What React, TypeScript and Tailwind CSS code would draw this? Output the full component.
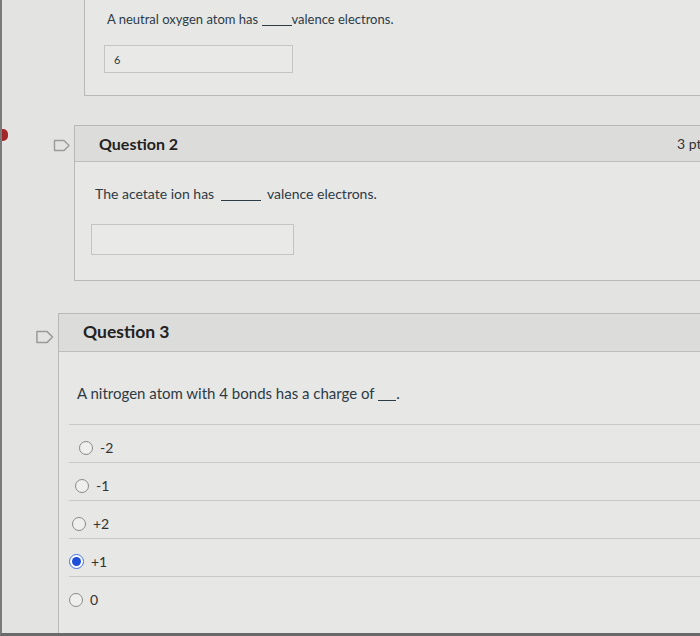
import React from "react";

function Flag({ w = 18, h = 13 }: { w?: number; h?: number }) {
  return (
    <svg width={w} height={h} viewBox="0 0 18 13" fill="none">
      <path d="M1.5 1.5 H11 L16 6.5 L11 11.5 H1.5 Z" stroke="#9a9a9a" strokeWidth="1.4" strokeLinejoin="round" />
    </svg>
  );
}

function Radio({ checked }: { checked?: boolean }) {
  if (checked) {
    return (
      <span className="w-[15px] h-[15px] rounded-full border-[1.5px] border-[#3b6fe0] bg-white flex items-center justify-center shrink-0">
        <span className="w-[9px] h-[9px] rounded-full bg-[#1f4fd8]" />
      </span>
    );
  }
  return <span className="w-[14px] h-[14px] rounded-full border-[1.5px] border-[#8a8a8a] bg-[#efefed] shrink-0" />;
}

function Blank({ w }: { w: string }) {
  return <span className={`inline-block h-[1px] bg-[#2d3b45] align-baseline translate-y-[2px] ${w}`} />;
}

export default function App() {
  const options = [
    { label: "-2", pl: "pl-[10px]" },
    { label: "-1", pl: "pl-[6px]" },
    { label: "+2", pl: "pl-[3px]" },
    { label: "+1", pl: "pl-[0px]", checked: true },
    { label: "0", pl: "pl-[0px]" },
  ];
  return (
    <div
      className="w-[700px] h-[636px] overflow-hidden bg-[#e3e3e1] relative border-l-2 border-l-[#7a7a7a] border-b-[3px] border-b-[#6a6a6a] text-[#2d3b45]"
      style={{ fontFamily: "Lato, 'Open Sans', sans-serif" }}
    >
      {/* Question 1 (tail) */}
      <div className="ml-[82px] h-[96px] border-l border-b border-[#b9b9b7] bg-[#e7e7e5] pl-[22px] pt-[10px]">
        <div className="text-[13px] leading-[18px]">
          A neutral oxygen atom has <Blank w="w-[30px]" />valence electrons.
        </div>
        <div className="mt-[17px] ml-[-3px] w-[189px] h-[28px] border border-[#c4c4c2] bg-[#e9e9e7] text-[11px] pl-[9px] pt-[6px]">6</div>
      </div>

      {/* Question 2 */}
      <div className="relative mt-[29px]">
        <div className="absolute left-[-4px] top-[4px] w-[10px] h-[12px] rounded-full bg-[#a3262a]" />
        <div className="absolute left-[51px] top-[14px]"><Flag /></div>
        <div className="ml-[72px] w-[660px] border border-[#b9b9b7] bg-[#e7e7e5]">
          <div className="h-[36px] bg-[#dcdcda] border-b border-[#bdbdbb] flex items-center">
            <span className="pl-[24px] text-[16px] font-bold text-[#222] flex-1">Question 2</span>
            <span className="w-[56px] text-[14px] text-[#333]">3 pts</span>
          </div>
          <div className="h-[118px] pl-[20px] pt-[23px]">
            <div className="text-[14px] leading-[18px]">
              The acetate ion has <Blank w="w-[40px] mx-[3px]" /> valence electrons.
            </div>
            <div className="mt-[21px] ml-[-4px] w-[203px] h-[31px] border border-[#c4c4c2] bg-[#e9e9e7]" />
          </div>
        </div>
      </div>

      {/* Question 3 */}
      <div className="relative mt-[32px]">
        <div className="absolute left-[33px] top-[17px]"><Flag w={20} h={14} /></div>
        <div className="ml-[56px] w-[680px] h-[330px] border-l border-t border-[#b9b9b7] bg-[#e7e7e5]">
          <div className="h-[38px] bg-[#dcdcda] border-b border-[#bdbdbb] flex items-center">
            <span className="pl-[24px] text-[17.5px] font-bold text-[#222]">Question 3</span>
          </div>
          <div className="pl-[18px] pt-[31px] text-[15px] leading-[20px]">
            A nitrogen atom with 4 bonds has a charge of <Blank w="w-[18px]" />.
          </div>
          <div className="ml-[10px] mt-[21px]">
            {options.map((o) => (
              <div
                key={o.label}
                className={`h-[38px] pt-[8px] flex items-center gap-[7px] border-t border-[#c9c9c7] ${o.pl}`}
              >
                <Radio checked={o.checked} />
                <span className="text-[14px] text-[#333]">{o.label}</span>
              </div>
            ))}
          </div>
        </div>
      </div>
    </div>
  );
}
